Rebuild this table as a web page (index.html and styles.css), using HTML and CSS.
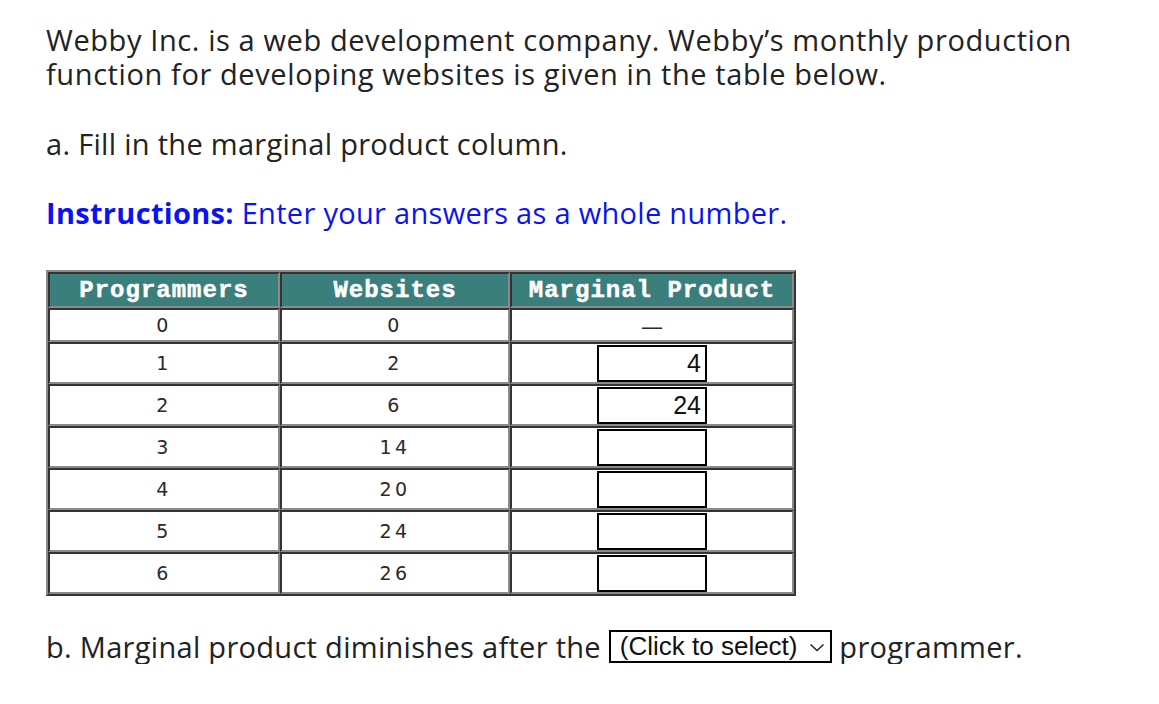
FILE: index.html
```html
<!DOCTYPE html>
<html>
<head>
<meta charset="utf-8">
<link rel="stylesheet" href="styles.css">
</head>
<body>
<div class="page">
  <p class="intro">Webby Inc. is a web development company. Webby’s monthly production function for developing websites is given in the table below.</p>
  <p class="q">a. Fill in the marginal product column.</p>
  <p class="instr"><b>Instructions:</b> Enter your answers as a whole number.</p>
  <table class="prod">
    <thead>
      <tr><th class="c1">Programmers</th><th class="c2">Websites</th><th class="c3">Marginal Product</th></tr>
    </thead>
    <tbody>
      <tr class="r0"><td>0</td><td>0</td><td class="dash">—</td></tr>
      <tr><td>1</td><td>2</td><td><span class="box">4</span></td></tr>
      <tr><td>2</td><td>6</td><td><span class="box">24</span></td></tr>
      <tr><td>3</td><td>14</td><td><span class="box"></span></td></tr>
      <tr><td>4</td><td>20</td><td><span class="box"></span></td></tr>
      <tr><td>5</td><td>24</td><td><span class="box"></span></td></tr>
      <tr><td>6</td><td>26</td><td><span class="box"></span></td></tr>
    </tbody>
  </table>
  <p class="q b">b. Marginal product diminishes after the <span class="select">(Click to select)<svg class="chev" width="16" height="9" viewBox="0 0 16 9"><path d="M1.5 1.5 L8 7.5 L14.5 1.5" fill="none" stroke="#222" stroke-width="1.5"/></svg></span> programmer.</p>
</div>
</body>
</html>
```
FILE: styles.css
```css
html, body { margin: 0; padding: 0; background: #fff; }
.page {
  padding: 23px 0 0 46px;
  font-family: "Open Sans", "Lato", sans-serif;
  color: #222;
  font-size: 29px;
  letter-spacing: 0.3px;
}
p { margin: 0; }
.intro { line-height: 34px; width: 1040px; letter-spacing: 0.6px; }
.q { margin-top: 36px; line-height: 34px; }
.instr { margin-top: 35px; line-height: 34px; color: #0a14f0; }
.instr b { font-weight: 700; }
table.prod {
  margin-top: 40px;
  border-collapse: separate;
  border-spacing: 0;
  border: 2px solid;
  border-color: #8a8a8a #333 #333 #8a8a8a;
  width: 750px;
  letter-spacing: 0;
}
.prod th, .prod td {
  border: 2px solid;
  border-color: #333 #8a8a8a #8a8a8a #333;
  text-align: center;
  padding: 0;
}
.prod th {
  background: #3a7f7c;
  color: #fff;
  font-family: "Liberation Mono", "Courier New", monospace;
  font-weight: 700;
  font-size: 24px;
  letter-spacing: 1px;
  -webkit-text-stroke: 0.5px #fff;
  height: 32px;
}
.c1 { width: 228px; }
.c2 { width: 226px; }
.prod td {
  font-family: "DejaVu Sans", sans-serif;
  font-size: 19px;
  letter-spacing: 3.5px;
  color: #2a2a2a;
  height: 38px;
}
.prod tr.r0 td { height: 29px; }
.prod td.dash { font-family: "Open Sans", sans-serif; letter-spacing: 0; font-size: 22px; }
.box {
  display: block;
  margin: 0 0 0 85px;
  width: 102px;
  height: 33px;
  border: 2px solid #000;
  font-family: "Liberation Sans", Arial, sans-serif;
  font-size: 25px;
  letter-spacing: 0;
  color: #111;
  line-height: 33px;
  text-align: right;
  padding-right: 4px;
}
.b { margin-top: 34px; }
.select {
  display: inline-flex;
  align-items: center;
  gap: 11px;
  height: 29px;
  border: 2px solid #000;
  font-family: "Liberation Sans", Arial, sans-serif;
  font-size: 26px;
  letter-spacing: 0;
  line-height: 29px;
  padding: 0 5px 0 9px;
  vertical-align: 3px;
  color: #111;
}
.chev { margin-top: 2px; }
```
